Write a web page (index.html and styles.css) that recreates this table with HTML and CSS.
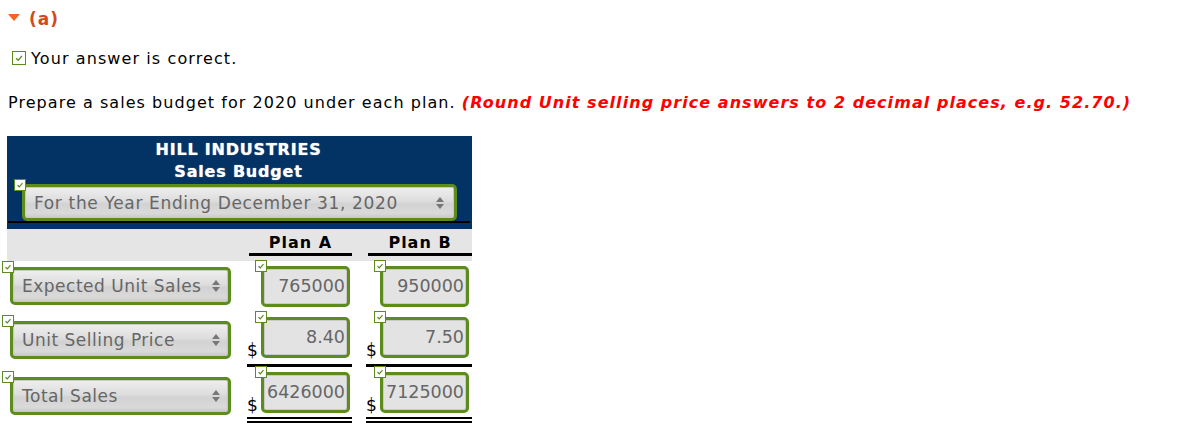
FILE: index.html
```html
<!DOCTYPE html>
<html>
<head>
<meta charset="utf-8">
<link rel="stylesheet" href="styles.css">
</head>
<body>
<div class="part">
  <span class="tri"></span><span class="part-label">(a)</span>
</div>
<div class="correct">
  <span class="okbox"><svg width="10" height="10" viewBox="0 0 10 10"><path d="M2 5.2 L4.2 7.2 L8 2.8" fill="none" stroke="#5b8c1d" stroke-width="1.3"/></svg></span>
  <span>Your answer is correct.</span>
</div>
<p class="prompt">Prepare a sales budget for 2020 under each plan. <em class="hint">(Round Unit selling price answers to 2 decimal places, e.g. 52.70.)</em></p>

<div class="budget">
  <div class="head">
    <div class="title">HILL INDUSTRIES</div>
    <div class="title">Sales Budget</div>
    <div class="period">
      <span class="cb cb-period"><svg width="8" height="8" viewBox="0 0 8 8"><path d="M1.5 4.2 L3.3 5.8 L6.5 2.2" fill="none" stroke="#5b8c1d" stroke-width="1.2"/></svg></span>
      <div class="sel sel-period"><span>For the Year Ending December 31, 2020</span><span class="arrows"></span></div>
    </div>
  </div>
  <div class="colhead">
    <div></div>
    <div class="plan">Plan A</div>
    <div></div>
    <div class="plan">Plan B</div>
  </div>

  <div class="row r1">
    <div class="lab">
      <span class="cb cb-lab"><svg width="8" height="8" viewBox="0 0 8 8"><path d="M1.5 4.2 L3.3 5.8 L6.5 2.2" fill="none" stroke="#5b8c1d" stroke-width="1.2"/></svg></span>
      <div class="sel sel-lab"><span>Expected Unit Sales</span><span class="arrows"></span></div>
    </div>
    <div class="val"><span class="dollar"></span><div class="box"><span class="cb cb-val"><svg width="8" height="8" viewBox="0 0 8 8"><path d="M1.5 4.2 L3.3 5.8 L6.5 2.2" fill="none" stroke="#5b8c1d" stroke-width="1.2"/></svg></span>765000</div></div>
    <div></div>
    <div class="val"><span class="dollar"></span><div class="box"><span class="cb cb-val"><svg width="8" height="8" viewBox="0 0 8 8"><path d="M1.5 4.2 L3.3 5.8 L6.5 2.2" fill="none" stroke="#5b8c1d" stroke-width="1.2"/></svg></span>950000</div></div>
  </div>

  <div class="row r2">
    <div class="lab">
      <span class="cb cb-lab"><svg width="8" height="8" viewBox="0 0 8 8"><path d="M1.5 4.2 L3.3 5.8 L6.5 2.2" fill="none" stroke="#5b8c1d" stroke-width="1.2"/></svg></span>
      <div class="sel sel-lab"><span>Unit Selling Price</span><span class="arrows"></span></div>
    </div>
    <div class="val"><span class="dollar">$</span><div class="box"><span class="cb cb-val"><svg width="8" height="8" viewBox="0 0 8 8"><path d="M1.5 4.2 L3.3 5.8 L6.5 2.2" fill="none" stroke="#5b8c1d" stroke-width="1.2"/></svg></span>8.40</div></div>
    <div></div>
    <div class="val"><span class="dollar">$</span><div class="box"><span class="cb cb-val"><svg width="8" height="8" viewBox="0 0 8 8"><path d="M1.5 4.2 L3.3 5.8 L6.5 2.2" fill="none" stroke="#5b8c1d" stroke-width="1.2"/></svg></span>7.50</div></div>
  </div>

  <div class="row r3">
    <div class="lab">
      <span class="cb cb-lab"><svg width="8" height="8" viewBox="0 0 8 8"><path d="M1.5 4.2 L3.3 5.8 L6.5 2.2" fill="none" stroke="#5b8c1d" stroke-width="1.2"/></svg></span>
      <div class="sel sel-lab"><span>Total Sales</span><span class="arrows"></span></div>
    </div>
    <div class="val"><span class="dollar">$</span><div class="box"><span class="cb cb-val"><svg width="8" height="8" viewBox="0 0 8 8"><path d="M1.5 4.2 L3.3 5.8 L6.5 2.2" fill="none" stroke="#5b8c1d" stroke-width="1.2"/></svg></span>6426000</div></div>
    <div></div>
    <div class="val"><span class="dollar">$</span><div class="box"><span class="cb cb-val"><svg width="8" height="8" viewBox="0 0 8 8"><path d="M1.5 4.2 L3.3 5.8 L6.5 2.2" fill="none" stroke="#5b8c1d" stroke-width="1.2"/></svg></span>7125000</div></div>
  </div>
</div>
</body>
</html>
```

FILE: styles.css
```css
html, body { margin: 0; padding: 0; background: #fff; }
body {
  font-family: "DejaVu Sans", Verdana, sans-serif;
  font-size: 16px;
  color: #000;
  padding: 0 0 0 8px;
  width: 1174px;
  height: 430px;
  overflow: hidden;
}
.part {
  display: flex;
  align-items: center;
  height: 20px;
  margin-top: 9px;
}
.tri {
  width: 0; height: 0;
  border-left: 6px solid transparent;
  border-right: 6px solid transparent;
  border-top: 7px solid #f26522;
  margin-right: 9px;
  margin-top: -4px;
}
.part-label { font-weight: bold; color: #d14b1a; font-size: 17px; letter-spacing: 1px; }

.correct {
  display: flex;
  align-items: center;
  margin-top: 19px;
  height: 20px;
  margin-left: 4px;
  letter-spacing: 1.1px;
}
.okbox {
  width: 12px; height: 12px;
  border: 1px solid #5b8c1d;
  display: inline-flex; align-items: center; justify-content: center;
  margin-right: 5px;
  background: #fff;
}
.prompt { margin: 25px 0 0 0; line-height: 20px; letter-spacing: 1.05px; }
.hint { color: #ff0000; font-weight: bold; }

.budget {
  margin-top: 23px;
  margin-left: -1px;
  width: 465px;
  position: relative;
}
.head {
  background: #033364;
  padding-top: 3px;
  height: 90px;
}
.title {
  color: #fff;
  font-weight: bold;
  text-align: center;
  line-height: 22px;
  font-size: 16px;
  letter-spacing: 0.8px;
  text-shadow: 0 0 1px #cbd6e6;
  padding-right: 2px;
}
.period {
  position: relative;
  margin: 1px 2px 0 1px;
  padding: 0 14px 0 14px;
  border-bottom: 2px solid #000;
  height: 37px;
}
.cb {
  position: absolute;
  width: 10px; height: 10px;
  border: 1px solid #5b8c1d;
  background: #fff;
  display: flex; align-items: center; justify-content: center;
  z-index: 2;
}
.cb-period { left: 6px; top: -5px; }
.sel {
  box-sizing: border-box;
  border: 3px solid #5b8c1d;
  border-radius: 5px;
  background: linear-gradient(#efefef 0%, #dddddd 45%, #d2d2d2 55%, #dedede 100%);
  box-shadow: inset 0 0 0 1px #c8c8c8, inset 0 -3px 3px rgba(0,0,0,0.08);
  color: #666;
  display: flex; align-items: center; justify-content: space-between;
  font-size: 17px;
  padding: 0 10px 0 9px;
}
.sel-period { height: 37px; width: 435px; letter-spacing: 0.65px; }
.arrows {
  width: 8px; height: 12px; position: relative;
}
.arrows::before, .arrows::after {
  content: ""; position: absolute; left: 0;
  border-left: 4px solid transparent; border-right: 4px solid transparent;
}
.arrows::before { top: 0; border-bottom: 5px solid #777; }
.arrows::after { bottom: 0; border-top: 5px solid #777; }

.colhead {
  display: grid;
  grid-template-columns: 240px 105px 14px 106px;
  background: #e5e5e5;
  height: 32px;
}
.plan {
  font-weight: bold;
  text-align: center;
  border-bottom: 3px solid #000;
  line-height: 24px;
  height: 22px;
  padding-top: 2px;
  margin: 0 0 0 2px;
  letter-spacing: 1px;
}
.row {
  display: grid;
  grid-template-columns: 240px 105px 14px 106px;
  position: relative;
}
.lab { position: relative; padding-left: 3px; }
.cb-lab { left: -5px; }
.sel-lab { width: 221px; height: 38px; letter-spacing: 0.5px; padding-right: 8px; }
.val {
  display: flex; align-items: flex-start;
  position: relative;
  padding-top: 5px;
  box-sizing: border-box;
}
.dollar {
  width: 14px; font-size: 17px; line-height: 17px;
  align-self: flex-end;
}
.box {
  position: relative;
  box-sizing: border-box;
  width: 89px;
  height: 41px;
  border: 3px solid #5b8c1d;
  border-radius: 5px;
  background: #e3e3e3;
  box-shadow: inset 0 0 0 1px #c9c9c9;
  color: #666;
  font-size: 17.5px;
  text-align: right;
  padding: 7px 2px 0 0;
}
.cb-val { left: -9px; top: -9px; }

.r1 { height: 51px; }
.r1 .lab { padding-top: 6px; }
.r1 .cb-lab { top: 0; }

.r2 { height: 55px; }
.r2 .lab { padding-top: 9px; }
.r2 .cb-lab { top: 3px; }
.r2 .val { border-bottom: 3px solid #000; }
.r2 .dollar { margin-bottom: 5px; }

.r3 { height: 60px; }
.r3 .lab { padding-top: 10px; }
.r3 .cb-lab { top: 4px; }
.r3 .dollar { margin-bottom: 13px; }
.r3 .val::after {
  content: ""; position: absolute; left: 0; right: 0; top: 50px;
  height: 2px; border-top: 2px solid #000; border-bottom: 2px solid #000;
}
```
